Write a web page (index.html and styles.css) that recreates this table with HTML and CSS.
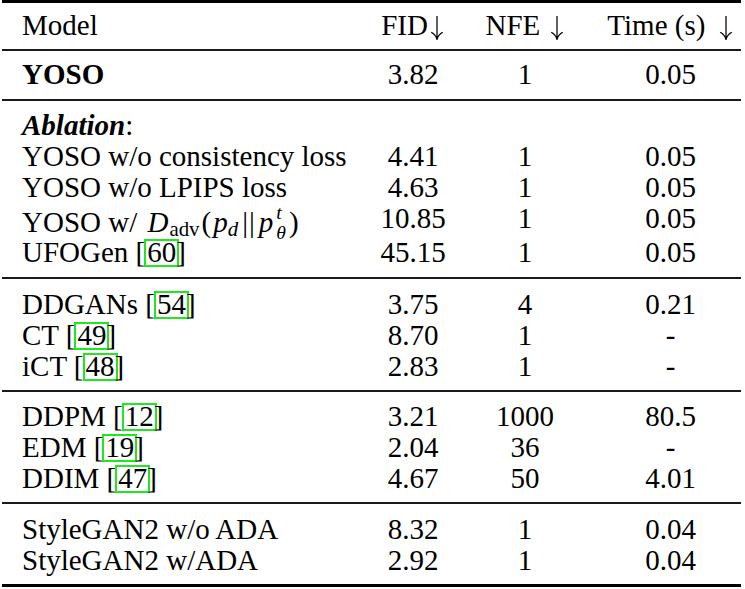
FILE: index.html
```html
<!DOCTYPE html>
<html>
<head>
<meta charset="utf-8">
<link rel="stylesheet" href="styles.css">
</head>
<body>
<div class="table">
  <div class="group head">
    <div class="row">
      <div class="model">Model</div>
      <div class="num">FID<svg class="arr" viewBox="0 0 16 26"><path d="M8 1V25M2 18C5 19.5 7 22 8 25.5C9 22 11 19.5 14 18"/></svg></div>
      <div class="num">NFE <svg class="arr" viewBox="0 0 16 26"><path d="M8 1V25M2 18C5 19.5 7 22 8 25.5C9 22 11 19.5 14 18"/></svg></div>
      <div class="num time">Time (s) <svg class="arr wide" viewBox="0 0 16 26"><path d="M8 1V25M2 18C5 19.5 7 22 8 25.5C9 22 11 19.5 14 18"/></svg></div>
    </div>
  </div>
  <div class="group main">
    <div class="row"><div class="model"><b>YOSO</b></div><div class="num">3.82</div><div class="num">1</div><div class="num time">0.05</div></div>
  </div>
  <div class="group ablation">
    <div class="row"><div class="model"><b><i>Ablation</i></b>:</div><div></div><div></div><div></div></div>
    <div class="row"><div class="model">YOSO w/o consistency loss</div><div class="num">4.41</div><div class="num">1</div><div class="num time">0.05</div></div>
    <div class="row"><div class="model">YOSO w/o LPIPS loss</div><div class="num">4.63</div><div class="num">1</div><div class="num time">0.05</div></div>
    <div class="row tall"><div class="model">YOSO w/ <span class="math"><i class="mi D">D</i><span class="sub rm">adv</span><span class="par">(</span><i class="mi">p</i><span class="sub"><i>d</i></span><span class="bars">||</span><i class="mi">p</i><span class="supsub"><i class="s">t</i><i class="s">θ</i></span><span class="par">)</span></span></div><div class="num">10.85</div><div class="num">1</div><div class="num time">0.05</div></div>
    <div class="row"><div class="model">UFOGen [<span class="cite">60</span>]</div><div class="num">45.15</div><div class="num">1</div><div class="num time">0.05</div></div>
  </div>
  <div class="group">
    <div class="row"><div class="model">DDGANs [<span class="cite">54</span>]</div><div class="num">3.75</div><div class="num">4</div><div class="num time">0.21</div></div>
    <div class="row"><div class="model">CT [<span class="cite">49</span>]</div><div class="num">8.70</div><div class="num">1</div><div class="num time">-</div></div>
    <div class="row"><div class="model">iCT [<span class="cite">48</span>]</div><div class="num">2.83</div><div class="num">1</div><div class="num time">-</div></div>
  </div>
  <div class="group">
    <div class="row"><div class="model">DDPM [<span class="cite">12</span>]</div><div class="num">3.21</div><div class="num">1000</div><div class="num time">80.5</div></div>
    <div class="row"><div class="model">EDM [<span class="cite">19</span>]</div><div class="num">2.04</div><div class="num">36</div><div class="num time">-</div></div>
    <div class="row"><div class="model">DDIM [<span class="cite">47</span>]</div><div class="num">4.67</div><div class="num">50</div><div class="num time">4.01</div></div>
  </div>
  <div class="group last">
    <div class="row"><div class="model">StyleGAN2 w/o ADA</div><div class="num">8.32</div><div class="num">1</div><div class="num time">0.04</div></div>
    <div class="row"><div class="model">StyleGAN2 w/ADA</div><div class="num">2.92</div><div class="num">1</div><div class="num time">0.04</div></div>
  </div>
</div>
</body>
</html>
```
FILE: styles.css
```css
html, body {
  margin: 0;
  padding: 0;
  background: #fff;
}
body {
  font-family: "Liberation Serif", "Times New Roman", serif;
  font-size: 29px;
  color: #000;
}
.table {
  margin-left: 2px;
  width: 739px;
  border-top: 3px solid #000;
  border-bottom: 3px solid #000;
}
.group {
  padding: 9.5px 0 8px;
}
.group + .group {
  border-top: 2px solid #1a1a1a;
}
.group.head {
  padding: 6.5px 0 8.5px;
}
.group.main {
  padding: 7.5px 0 9px;
}
.group.ablation {
  padding-bottom: 9px;
}
.row {
  display: grid;
  grid-template-columns: 368px 86px 138px 147px;
  height: 31px;
  line-height: 31px;
  white-space: nowrap;
}
.row.tall {
  height: 34px;
}
.model {
  padding-left: 20px;
}
.num {
  text-align: center;
}
.time {
  padding-left: 6px;
}
.arr {
  display: inline-block;
  width: 16px;
  height: 25px;
  vertical-align: -5px;
  margin-left: 1px;
}
.arr.wide {
  margin-left: 5px;
}
.arr path {
  fill: none;
  stroke: #000;
  stroke-width: 1.3;
}
.math .mi {
  font-style: italic;
}
.math .D {
  margin-left: 3px;
  margin-right: 1px;
}
.sub {
  font-size: 0.72em;
  line-height: 0;
  vertical-align: -0.18em;
}
.rm {
  font-style: normal;
}
.par {
  margin: 0 2px;
}
.bars {
  margin: 0 3px 0 4px;
  letter-spacing: 1px;
}
.supsub {
  display: inline-block;
  vertical-align: -0.35em;
  font-size: 0.68em;
  line-height: 1em;
  margin-left: 3px;
  margin-right: 1px;
}
.supsub .s {
  display: block;
}
.cite {
  display: inline-block;
  border: 2px solid #22e622;
  line-height: 22px;
  padding: 0 1px 2px;
  margin: 0 -3px 0 -1px;
}
```
